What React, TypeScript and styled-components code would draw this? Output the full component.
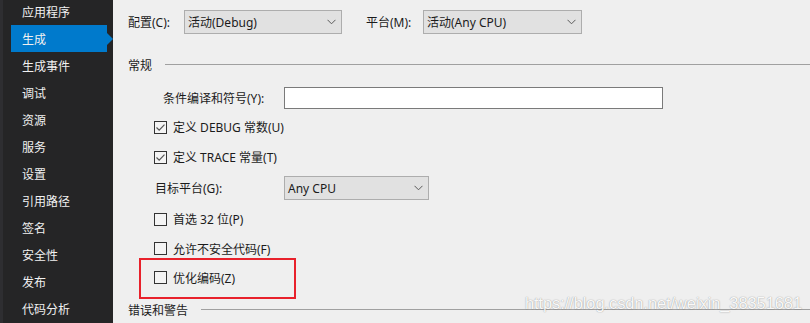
import React from "react";
import styled, { createGlobalStyle } from "styled-components";

const Global = createGlobalStyle`
  html, body { margin: 0; padding: 0; background: #efefef; overflow: hidden; }
  body { font-family: "Noto Sans", "Noto Sans CJK SC", sans-serif; }
`;

const Frame = styled.div`
  display: flex;
  width: 810px;
  height: 323px;
  overflow: hidden;
  font-family: "Noto Sans", "Noto Sans CJK SC", sans-serif;
  font-size: 12px;
`;

const Sidebar = styled.nav`
  width: 113px;
  flex: none;
  background: #252526;
  box-shadow: inset 3px 0 0 #2e2e31;
  padding-left: 11px;
  box-sizing: border-box;
`;

const NavList = styled.ul`
  list-style: none;
  margin: -2px 0 0;
  padding: 0;
`;

const NavItem = styled.li<{ $active?: boolean }>`
  position: relative;
  width: 96px;
  height: 27px;
  padding-left: 11px;
  box-sizing: border-box;
  display: flex;
  align-items: center;
  color: #f1f1f1;
  font-family: "Noto Sans CJK SC", sans-serif;
  font-size: 12px;
  background: ${(p) => (p.$active ? "#007acc" : "transparent")};
  &::after {
    content: "";
    display: ${(p) => (p.$active ? "block" : "none")};
    position: absolute;
    left: 100%;
    top: 50%;
    transform: translateY(-50%);
    border-left: 6px solid #007acc;
    border-top: 6px solid transparent;
    border-bottom: 6px solid transparent;
  }
`;

const Main = styled.main`
  position: relative;
  flex: 1;
  background: #efefef;
  padding-left: 14px;
  color: #1b1b1b;
  display: flex;
  flex-direction: column;
`;

const ConfigBar = styled.div`
  display: flex;
  align-items: center;
  height: 24px;
  margin-top: 10px;
`;

const FieldLabel = styled.span<{ $width: number; $indent?: number }>`
  flex: none;
  width: ${(p) => p.$width}px;
  margin-left: ${(p) => p.$indent ?? 0}px;
  padding-left: 1px;
  box-sizing: border-box;
  white-space: nowrap;
`;

const Select = styled.div<{ $width: number }>`
  flex: none;
  width: ${(p) => p.$width}px;
  height: 24px;
  box-sizing: border-box;
  border: 1px solid #adadad;
  background: #e1e1e1;
  display: flex;
  align-items: center;
  justify-content: space-between;
  padding: 0 5px 0 3px;
  white-space: nowrap;
`;

const Divider = styled.div`
  height: 1px;
  background: #a0a0a0;
  margin-top: 16px;
`;

const GroupHeader = styled.div<{ $height: number }>`
  display: flex;
  align-items: center;
  height: ${(p) => p.$height}px;
  flex: none;
`;

const GroupTitle = styled.span`
  padding-left: 1px;
  font-family: "Noto Sans CJK SC", sans-serif;
`;

const GroupRule = styled.div`
  flex: 1;
  height: 1px;
  background: #a0a0a0;
  margin-left: 13px;
`;

const GroupBody = styled.div`
  padding-left: 27px;
  display: flex;
  flex-direction: column;
`;

const FieldRow = styled.div<{ $height: number; $top?: number; $indent?: number }>`
  position: relative;
  display: flex;
  align-items: center;
  height: ${(p) => p.$height}px;
  margin-top: ${(p) => p.$top ?? 0}px;
  padding-left: ${(p) => p.$indent ?? 0}px;
  flex: none;
`;

const TextBox = styled.div`
  width: 379px;
  height: 22px;
  box-sizing: border-box;
  border: 1px solid #7a7a7a;
  background: #ffffff;
`;

const Box = styled.span`
  width: 13px;
  height: 13px;
  box-sizing: border-box;
  border: 1px solid #333333;
  background: #f4f4f4;
  margin-right: 6px;
  display: flex;
  align-items: center;
  justify-content: center;
  flex: none;
`;

const Annotation = styled.span`
  position: absolute;
  left: -15px;
  top: -5px;
  width: 157px;
  height: 41px;
  box-sizing: border-box;
  border: 2px solid #e8212b;
  pointer-events: none;
`;

const Watermark = styled.span`
  position: absolute;
  right: 8px;
  bottom: 10px;
  font-family: "Liberation Sans", Arial, sans-serif;
  font-size: 16.5px;
  letter-spacing: -0.1px;
  color: rgba(255, 255, 255, 0.95);
  text-shadow: 0 0 1px rgba(0, 0, 0, 0.35), 0 0 2px rgba(0, 0, 0, 0.12);
  white-space: nowrap;
`;

const Chevron = () => (
  <svg width="9" height="6" viewBox="0 0 9 6">
    <polyline points="0.5,0.8 4.5,4.8 8.5,0.8" fill="none" stroke="#5a5a5a" strokeWidth="1" />
  </svg>
);

const Check = () => (
  <svg width="11" height="11" viewBox="0 0 11 11">
    <polyline points="1.5,5.5 4.2,8.2 9.5,2.6" fill="none" stroke="#555" strokeWidth="1.2" />
  </svg>
);

const Checkbox: React.FC<{ checked?: boolean; label: string; height: number; annotated?: boolean }> = ({
  checked,
  label,
  height,
  annotated,
}) => (
  <FieldRow $height={height}>
    <Box>{checked && <Check />}</Box>
    <span>{label}</span>
    {annotated && <Annotation />}
  </FieldRow>
);

const navItems = [
  "应用程序",
  "生成",
  "生成事件",
  "调试",
  "资源",
  "服务",
  "设置",
  "引用路径",
  "签名",
  "安全性",
  "发布",
  "代码分析",
];

export default function App() {
  return (
    <>
      <Global />
      <Frame>
        <Sidebar>
          <NavList>
            {navItems.map((n) => (
              <NavItem key={n} $active={n === "生成"}>
                {n}
              </NavItem>
            ))}
          </NavList>
        </Sidebar>
        <Main>
          <ConfigBar>
            <FieldLabel $width={57}>配置(C):</FieldLabel>
            <Select $width={158}>
              <span>活动(Debug)</span>
              <Chevron />
            </Select>
            <FieldLabel $width={58} $indent={23}>
              平台(M):
            </FieldLabel>
            <Select $width={159}>
              <span>活动(Any CPU)</span>
              <Chevron />
            </Select>
          </ConfigBar>
          <Divider />
          <GroupHeader $height={28}>
            <GroupTitle>常规</GroupTitle>
            <GroupRule />
          </GroupHeader>
          <GroupBody>
            <FieldRow $height={22} $top={9} $indent={8}>
              <FieldLabel $width={122}>条件编译和符号(Y):</FieldLabel>
              <TextBox />
            </FieldRow>
            <FieldRow $height={3} />
            <Checkbox checked label="定义 DEBUG 常数(U)" height={30} />
            <Checkbox checked label="定义 TRACE 常量(T)" height={30} />
            <FieldRow $height={32}>
              <FieldLabel $width={130}>目标平台(G):</FieldLabel>
              <Select $width={145}>
                <span>Any CPU</span>
                <Chevron />
              </Select>
            </FieldRow>
            <Checkbox label="首选 32 位(P)" height={30} />
            <Checkbox label="允许不安全代码(F)" height={29} />
            <Checkbox label="优化编码(Z)" height={29} annotated />
          </GroupBody>
          <GroupHeader $height={34}>
            <GroupTitle>错误和警告</GroupTitle>
            <GroupRule />
          </GroupHeader>
          <Watermark>https://blog.csdn.net/weixin_38351681</Watermark>
        </Main>
      </Frame>
    </>
  );
}
